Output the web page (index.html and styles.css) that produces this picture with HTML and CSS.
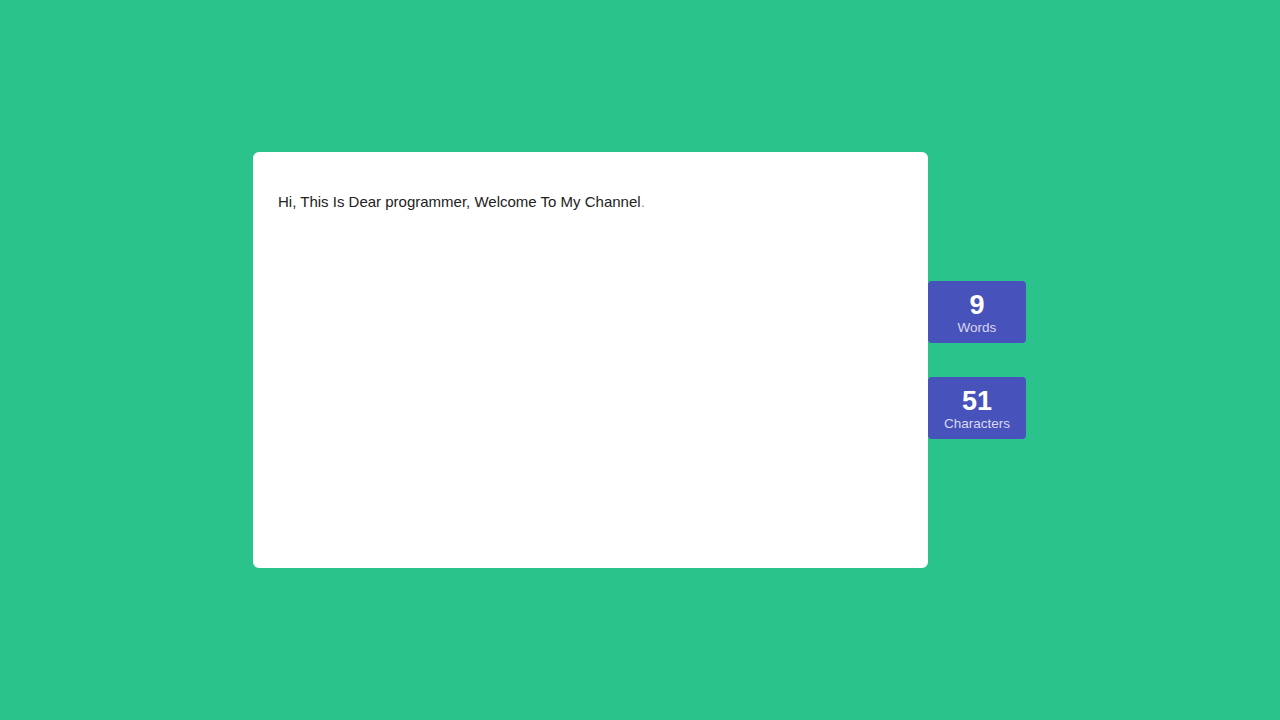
FILE: index.html
```html
<!DOCTYPE html>
<html>
<head>
<meta charset="utf-8">
<link rel="stylesheet" href="styles.css">
</head>
<body>
<div class="wrap">
  <div class="card">
    <p class="text">Hi, This Is Dear programmer, Welcome To My Channel<span class="dot">.</span></p>
  </div>
  <div class="stats">
    <div class="stat">
      <div class="num">9</div>
      <div class="label">Words</div>
    </div>
    <div class="stat">
      <div class="num">51</div>
      <div class="label">Characters</div>
    </div>
  </div>
</div>
</body>
</html>
```

FILE: styles.css
```css
html, body {
  margin: 0;
  padding: 0;
  height: 100%;
}
body {
  background: #29c38b;
  font-family: "Liberation Sans", Arial, sans-serif;
}
.wrap {
  height: 720px;
  display: flex;
  align-items: center;
  justify-content: center;
  padding-right: 1px;
}
.card {
  width: 675px;
  height: 416px;
  background: #ffffff;
  border-radius: 6px;
  box-sizing: border-box;
  padding: 41px 25px;
}
.text {
  margin: 0;
  font-size: 15px;
  line-height: 18px;
  color: #222222;
}
.dot {
  color: #9a9a9a;
}
.stats {
  display: flex;
  flex-direction: column;
  gap: 34px;
}
.stat {
  width: 98px;
  height: 62px;
  box-sizing: border-box;
  background: #4852bb;
  border-radius: 4px;
  display: flex;
  flex-direction: column;
  align-items: center;
  padding-top: 9px;
}
.num {
  color: #ffffff;
  font-weight: bold;
  font-size: 27px;
  line-height: 30px;
}
.label {
  color: #d8d9f0;
  font-size: 13.5px;
  line-height: 16px;
}
```
